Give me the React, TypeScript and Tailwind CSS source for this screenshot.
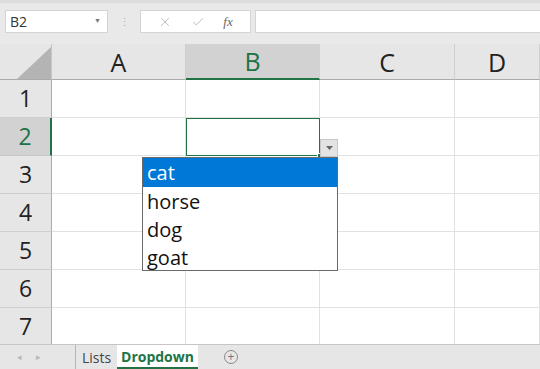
import { Check, X } from "lucide-react";

const cols = [
  { id: "A", w: "w-[134px]" },
  { id: "B", w: "w-[134px]" },
  { id: "C", w: "w-[135px]" },
  { id: "D", w: "flex-1" },
];

const rows = [1, 2, 3, 4, 5, 6, 7];
const items = ["cat", "horse", "dog", "goat"];

export default function App() {
  return (
    <div
      className="relative w-[540px] h-[369px] overflow-hidden bg-white text-black"
      style={{ fontFamily: '"Open Sans", "Noto Sans", sans-serif' }}
    >
      {/* formula bar */}
      <div className="h-[44px] bg-[#e9e9e9] border-t-[3px] border-[#dcdcdc] flex items-start pt-[7px] pl-[5px]">
        <div className="w-[103px] h-[23px] bg-white border border-[#d4d4d4] flex items-center justify-between pl-[4px] pr-[6px]">
          <span className="text-[14px] text-[#333]">B2</span>
          <span className="text-[7px] text-[#777]">▼</span>
        </div>
        <div className="w-[32px] h-[23px] flex items-center justify-center text-[#b0b0b0] text-[11px] leading-none">⋮</div>
        <div className="w-[111px] h-[23px] bg-white border border-[#d4d4d4] flex items-center justify-around px-[8px]">
          <X className="w-[14px] h-[14px] text-[#b5b5b5]" strokeWidth={1.5} />
          <Check className="w-[14px] h-[14px] text-[#b5b5b5]" strokeWidth={1.5} />
          <span className="text-[13px] italic text-[#666]" style={{ fontFamily: '"Liberation Serif", serif' }}>fx</span>
        </div>
        <div className="flex-1 ml-[4px] h-[23px] bg-white border border-[#d4d4d4] border-r-0" />
      </div>

      {/* column headers */}
      <div className="flex h-[36px] bg-[#e6e6e6]">
        <div className="w-[52px] h-full border-r border-[#c6c6c6] border-b border-b-[#ababab] relative">
          <svg className="absolute left-[17px] top-[3px]" width="34" height="32" viewBox="0 0 34 32">
            <polygon points="34,0 34,32 0,32" fill="#b4b4b4" />
          </svg>
        </div>
        {cols.map((c) =>
          c.id === "B" ? (
            <div
              key={c.id}
              className={`${c.w} h-full bg-[#d2d2d2] border-r border-[#d2d2d2] border-b-2 border-b-[#217346] flex items-center justify-center pt-[2px] text-[25px] text-[#217346]`}
            >
              {c.id}
            </div>
          ) : (
            <div
              key={c.id}
              className={`${c.w} h-full border-r border-[#cfcfcf] border-b border-b-[#ababab] flex items-center justify-center pt-[2px] text-[25px] text-[#222]`}
            >
              {c.id}
            </div>
          )
        )}
      </div>

      {/* grid */}
      <div className="h-[264px] overflow-hidden">
        {rows.map((r) => (
          <div key={r} className="flex h-[38px]">
            {r === 2 ? (
              <div className="w-[52px] h-full bg-[#d2d2d2] border-r-2 border-[#217346] border-b border-b-[#c6c6c6] flex items-center justify-center text-[23px] text-[#217346]">
                {r}
              </div>
            ) : (
              <div className="w-[52px] h-full bg-[#e6e6e6] border-r border-[#ababab] border-b border-b-[#cfcfcf] flex items-center justify-center text-[23px] text-[#222]">
                {r}
              </div>
            )}
            {cols.map((c) =>
              r === 2 && c.id === "B" ? (
                <div key={c.id} className={`${c.w} h-full border-[1.5px] border-[#217346] relative`}>
                  <div className="absolute -right-[3px] -bottom-[3px] w-[5px] h-[5px] bg-[#217346] border border-white" />
                </div>
              ) : (
                <div key={c.id} className={`${c.w} h-full border-r border-b border-[#e1e1e1]`} />
              )
            )}
          </div>
        ))}
      </div>

      {/* sheet tabs */}
      <div className="h-[25px] bg-[#e6e6e6] border-t border-[#c6c6c6] flex items-stretch">
        <div className="w-[75px] flex items-center gap-[14px] pl-[17px] text-[9px] text-[#b8b8b8]">
          <span>◂</span>
          <span>▸</span>
        </div>
        <div className="border-l border-[#b4b4b4] w-[42px] flex items-center justify-center text-[14px] text-[#444]">
          Lists
        </div>
        <div className="w-[81px] bg-white border-b-2 border-[#217346] flex items-center justify-center text-[14px] font-bold text-[#217346]">
          Dropdown
        </div>
        <div className="ml-[26px] flex items-center">
          <div className="w-[14px] h-[14px] rounded-full border border-[#8a8a8a] flex items-center justify-center text-[12px] leading-none text-[#777]">
            +
          </div>
        </div>
      </div>

      {/* validation dropdown button */}
      <div className="absolute left-[320px] top-[139px] w-[18px] h-[18px] bg-[#e3e3e3] border border-[#c8c8c8] flex items-center justify-center">
        <svg width="7" height="4" viewBox="0 0 7 4">
          <polygon points="0,0 7,0 3.5,4" fill="#666" />
        </svg>
      </div>

      {/* dropdown list */}
      <div className="absolute left-[142px] top-[157px] w-[196px] h-[114px] bg-white border border-[#6a6a6a]">
        {items.map((it, i) => (
          <div
            key={it}
            className={`pl-[4px] flex items-center text-[20px] leading-none ${
              i === 0 ? "h-[29px] bg-[#0078d7] text-white" : "h-[28px] pt-[1px] text-[#111]"
            }`}
          >
            {it}
          </div>
        ))}
      </div>
    </div>
  );
}
